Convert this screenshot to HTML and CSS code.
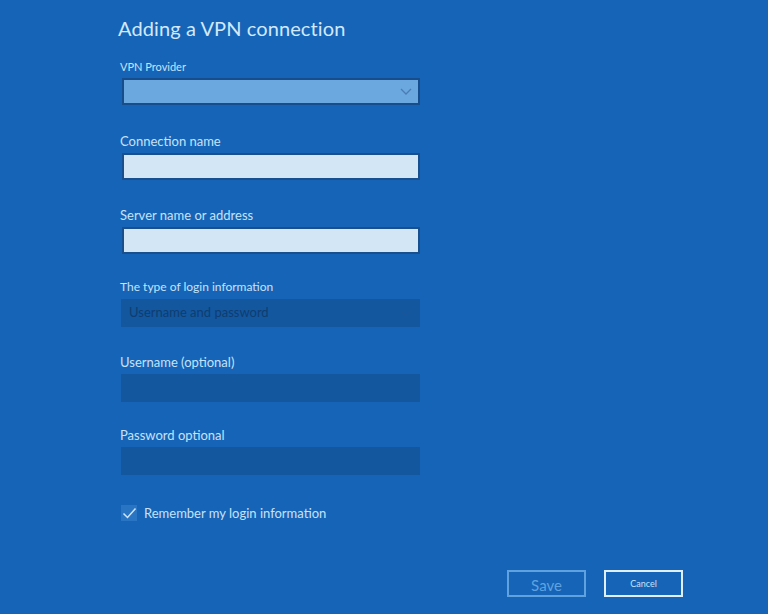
FILE: index.html
```html
<!DOCTYPE html>
<html>
<head>
<meta charset="utf-8">
<link rel="stylesheet" href="styles.css">
</head>
<body>
<div class="page">
  <h1 class="title">Adding a VPN connection</h1>
  <div class="field f-provider">
    <div class="label small">VPN Provider</div>
    <div class="select light">
      <svg class="chev" width="12" height="7" viewBox="0 0 12 7"><path d="M1 1 L6 6 L11 1" fill="none" stroke="#4a7db5" stroke-width="1.3"/></svg>
    </div>
  </div>
  <div class="field f-conn">
    <div class="label">Connection name</div>
    <div class="input pale"></div>
  </div>
  <div class="field f-server">
    <div class="label">Server name or address</div>
    <div class="input pale"></div>
  </div>
  <div class="field f-type">
    <div class="label mid">The type of login information</div>
    <div class="select dark">
      <span class="seltext">Username and password</span>
      <svg class="chev" width="12" height="7" viewBox="0 0 12 7"><path d="M1 1 L6 6 L11 1" fill="none" stroke="#1a5799" stroke-width="1.2"/></svg>
    </div>
  </div>
  <div class="field f-user">
    <div class="label">Username (optional)</div>
    <div class="input dark"></div>
  </div>
  <div class="field f-pass">
    <div class="label">Password optional</div>
    <div class="input dark"></div>
  </div>
  <div class="check-row">
    <span class="checkbox">
      <svg width="16" height="16" viewBox="0 0 16 16"><path d="M2.5 8.5 L6.5 12.5 L14.5 3.5" fill="none" stroke="#cfe6fa" stroke-width="1.5"/></svg>
    </span>
    <span class="check-label">Remember my login information</span>
  </div>
  <div class="buttons">
    <button class="btn save">Save</button>
    <button class="btn cancel">Cancel</button>
  </div>
</div>
</body>
</html>
```
FILE: styles.css
```css
html, body {
  margin: 0;
  padding: 0;
  background: #1664b8;
  width: 768px;
  height: 614px;
  overflow: hidden;
}
.page {
  font-family: "Lato", "Open Sans", sans-serif;
  color: #c6e2f7;
  padding: 14px 0 0 118px;
  display: flex;
  flex-direction: column;
}
.title {
  margin: 0;
  font-weight: 400;
  font-size: 20px;
  line-height: 28px;
  color: #d2e9fa;
  letter-spacing: 0.1px;
}
.field {
  display: flex;
  flex-direction: column;
  padding-left: 2px;
}
.label {
  font-size: 13px;
  line-height: 16px;
  margin-bottom: 4px;
}
.label.small { font-size: 11px; line-height: 14px; margin-bottom: 4px; }
.label.mid { font-size: 12px; margin-bottom: 4px; }
.f-provider { margin-top: 18px; }
.f-conn { margin-top: 28px; }
.f-server { margin-top: 27px; }
.f-type { margin-top: 25px; }
.f-user { margin-top: 27px; }
.f-pass { margin-top: 25px; }
.select, .input {
  box-sizing: border-box;
  width: 298px;
  height: 27px;
  position: relative;
}
.select.light {
  margin-left: 2px;
  background: #6aa8df;
  border: 2px solid #184d8c;
  width: 298px;
}
.input.pale {
  margin-left: 2px;
  background: #d3e6f6;
  border: 2px solid #1a4f8e;
  width: 298px;
}
.select.dark, .input.dark {
  margin-left: 1px;
  width: 299px;
  height: 28px;
  background: #13579f;
}
.chev {
  position: absolute;
  right: 6px;
  top: 8px;
}
.select.dark .chev { top: 11px; right: 8px; }
.seltext {
  position: absolute;
  left: 8px;
  top: 5px;
  font-size: 13px;
  color: #0f3d70;
}
.check-row {
  margin-top: 30px;
  padding-left: 3px;
  display: flex;
  align-items: center;
  gap: 7px;
}
.checkbox {
  width: 16px;
  height: 16px;
  background: #2a74c4;
  display: flex;
}
.check-label {
  font-size: 13px;
  color: #c6e2f7;
}
.buttons {
  margin-top: 49px;
  margin-left: 389px;
  display: flex;
  gap: 18px;
}
.btn {
  box-sizing: border-box;
  width: 79px;
  height: 27px;
  background: transparent;
  font-family: "Lato", "Open Sans", sans-serif;
  padding: 0;
}
.save {
  border: 2px solid #5fa2df;
  color: #5fa2df;
  font-size: 15px;
  padding-top: 2px;
}
.cancel {
  border: 2px solid #dff0fc;
  color: #c6e2f7;
  font-size: 9px;
}
```
